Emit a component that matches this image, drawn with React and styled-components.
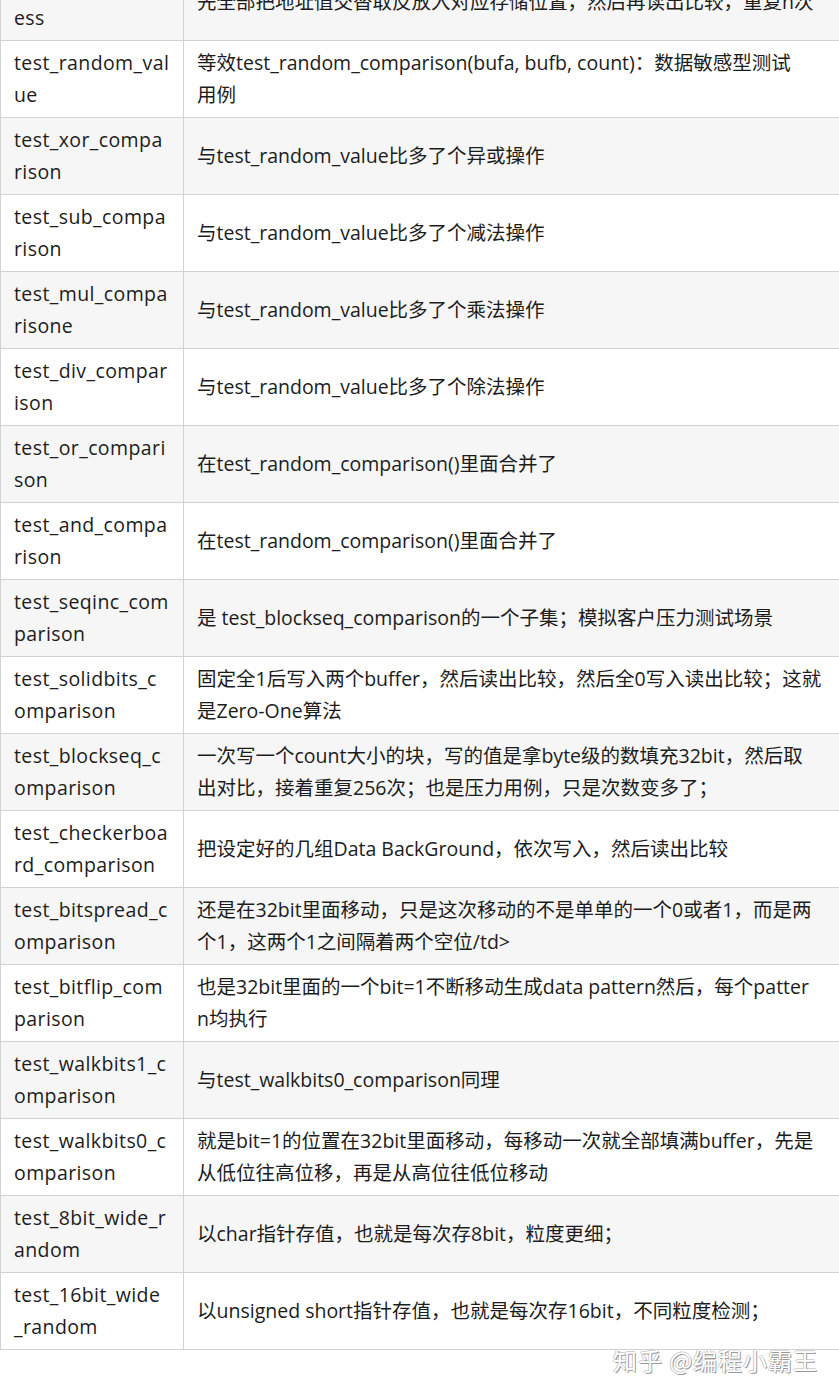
import React from 'react'
import styled, { createGlobalStyle } from 'styled-components'

const GlobalStyle = createGlobalStyle`
  html, body {
    margin: 0;
    padding: 0;
    background: #ffffff;
    overflow: hidden;
  }
  body {
    font-family: "Open Sans", "Noto Sans CJK SC", sans-serif;
  }
`

const Page = styled.div`
  position: relative;
  width: 839px;
  height: 1395px;
  overflow: hidden;
`

const Table = styled.table`
  width: 100%;
  margin-top: -37px;
  border-collapse: collapse;
  table-layout: fixed;
  color: #1c1c1c;
  font-size: 19.5px;
  line-height: 32px;
`

const Row = styled.tr`
  background: ${(props) => (props.$shaded ? '#f6f6f6' : '#ffffff')};
`

const Cell = styled.td`
  height: 64px;
  padding: 6px 13px;
  border: 1px solid #d2d2d2;
  border-right: none;
  vertical-align: middle;
  white-space: nowrap;
  overflow: hidden;
`

const NameCell = styled(Cell)`
  width: 156px;
  letter-spacing: 0.4px;
`

const Watermark = styled.div`
  position: absolute;
  left: 613px;
  top: 1345px;
  font-family: "Noto Sans CJK SC", sans-serif;
  font-size: 24px;
  line-height: 30px;
  letter-spacing: 1px;
  color: #ffffff;
  text-shadow: 1px 1px 0 #9a9a9a, -1px 0 0 #c8c8c8, 0 -1px 0 #d0d0d0;
`

const rows = [
  [['test_stuck_addr', 'ess'], ['先全部把地址值交替取反放入对应存储位置，然后再读出比较，重复n次']],
  [['test_random_val', 'ue'], ['等效test_random_comparison(bufa, bufb, count)：数据敏感型测试', '用例']],
  [['test_xor_compa', 'rison'], ['与test_random_value比多了个异或操作']],
  [['test_sub_compa', 'rison'], ['与test_random_value比多了个减法操作']],
  [['test_mul_compa', 'risone'], ['与test_random_value比多了个乘法操作']],
  [['test_div_compar', 'ison'], ['与test_random_value比多了个除法操作']],
  [['test_or_compari', 'son'], ['在test_random_comparison()里面合并了']],
  [['test_and_compa', 'rison'], ['在test_random_comparison()里面合并了']],
  [['test_seqinc_com', 'parison'], ['是 test_blockseq_comparison的一个子集；模拟客户压力测试场景']],
  [['test_solidbits_c', 'omparison'], ['固定全1后写入两个buffer，然后读出比较，然后全0写入读出比较；这就', '是Zero-One算法']],
  [['test_blockseq_c', 'omparison'], ['一次写一个count大小的块，写的值是拿byte级的数填充32bit，然后取', '出对比，接着重复256次；也是压力用例，只是次数变多了；']],
  [['test_checkerboa', 'rd_comparison'], ['把设定好的几组Data BackGround，依次写入，然后读出比较']],
  [['test_bitspread_c', 'omparison'], ['还是在32bit里面移动，只是这次移动的不是单单的一个0或者1，而是两', '个1，这两个1之间隔着两个空位/td>']],
  [['test_bitflip_com', 'parison'], ['也是32bit里面的一个bit=1不断移动生成data pattern然后，每个patter', 'n均执行']],
  [['test_walkbits1_c', 'omparison'], ['与test_walkbits0_comparison同理']],
  [['test_walkbits0_c', 'omparison'], ['就是bit=1的位置在32bit里面移动，每移动一次就全部填满buffer，先是', '从低位往高位移，再是从高位往低位移动']],
  [['test_8bit_wide_r', 'andom'], ['以char指针存值，也就是每次存8bit，粒度更细；']],
  [['test_16bit_wide', '_random'], ['以unsigned short指针存值，也就是每次存16bit，不同粒度检测；']],
]

const Lines = ({ lines }) =>
  lines.map((line, i) => (
    <React.Fragment key={i}>
      {i > 0 && <br />}
      {line}
    </React.Fragment>
  ))

const App = () => {
  return (
    <>
      <GlobalStyle />
      <Page>
        <Table>
          <tbody>
            {rows.map(([name, desc], index) => (
              <Row key={index} $shaded={index % 2 === 0}>
                <NameCell>
                  <Lines lines={name} />
                </NameCell>
                <Cell>
                  <Lines lines={desc} />
                </Cell>
              </Row>
            ))}
          </tbody>
        </Table>
        <Watermark>知乎 @编程小霸王</Watermark>
      </Page>
    </>
  )
}

export default App
